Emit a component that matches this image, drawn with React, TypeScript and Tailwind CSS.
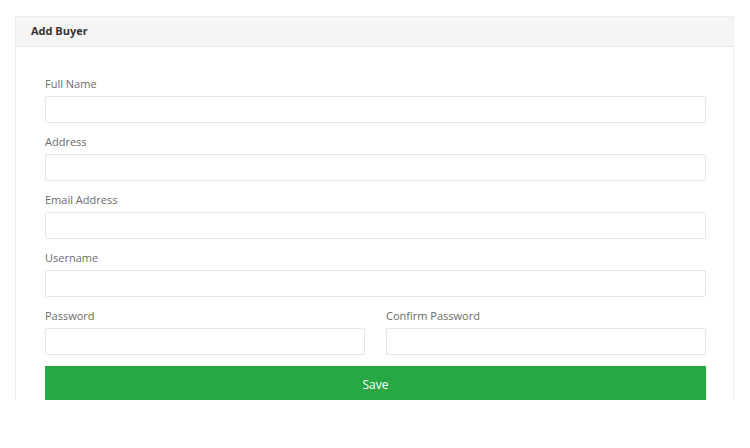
import React from "react";

function Field({ label }: { label: string }) {
  return (
    <div className="flex flex-col">
      <label className="h-[16px] text-[11px] leading-[16px] text-[#6b6b6b]">{label}</label>
      <input className="mt-[4px] h-[27px] w-full rounded-[2px] border border-[#e6e6e6] bg-white outline-none" />
    </div>
  );
}

export default function App() {
  return (
    <div
      className="h-[400px] overflow-hidden bg-white pl-[15px] pt-[16px]"
      style={{ fontFamily: '"Open Sans", "Noto Sans", sans-serif' }}
    >
      <div className="w-[719px] border border-[#ececec]">
        <div className="flex h-[30px] items-center border-b border-[#e8e8e8] bg-[#f5f5f5] px-[15px]">
          <span className="text-[11px] font-bold text-[#333]">Add Buyer</span>
        </div>
        <div className="flex flex-col gap-[11px] pl-[29px] pr-[27px] pt-[29px]">
          <Field label="Full Name" />
          <Field label="Address" />
          <Field label="Email Address" />
          <Field label="Username" />
          <div className="grid grid-cols-2 gap-[21px]">
            <Field label="Password" />
            <Field label="Confirm Password" />
          </div>
          <button className="h-[38px] w-full bg-[#28a745] text-[12px] text-white">Save</button>
        </div>
      </div>
    </div>
  );
}
